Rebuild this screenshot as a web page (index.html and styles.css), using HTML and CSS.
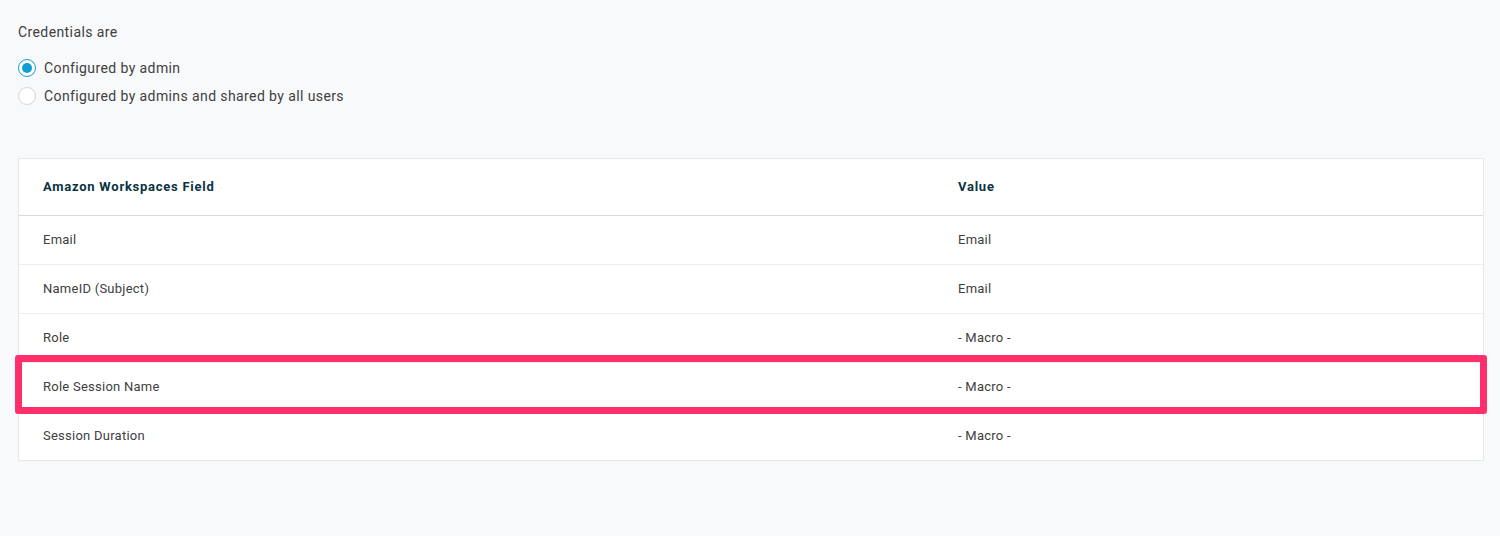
FILE: index.html
```html
<!DOCTYPE html>
<html lang="en">
<head>
    <meta charset="UTF-8">
    <title>Amazon Workspaces - Attribute mapping</title>
    <link rel="stylesheet" href="styles.css">
</head>
<body>
    <section class="credentials">
        <p class="credentials-title">Credentials are</p>
        <label class="radio-option">
            <input type="radio" name="credentials" checked>
            <span class="radio-mark"></span>
            Configured by admin
        </label>
        <label class="radio-option">
            <input type="radio" name="credentials">
            <span class="radio-mark"></span>
            Configured by admins and shared by all users
        </label>
    </section>

    <div class="field-table">
        <div class="field-row field-head">
            <div class="cell">Amazon Workspaces Field</div>
            <div class="cell">Value</div>
        </div>
        <div class="field-row">
            <div class="cell">Email</div>
            <div class="cell">Email</div>
        </div>
        <div class="field-row">
            <div class="cell">NameID (Subject)</div>
            <div class="cell">Email</div>
        </div>
        <div class="field-row">
            <div class="cell">Role</div>
            <div class="cell">- Macro -</div>
        </div>
        <div class="field-row highlighted">
            <div class="cell">Role Session Name</div>
            <div class="cell">- Macro -</div>
        </div>
        <div class="field-row">
            <div class="cell">Session Duration</div>
            <div class="cell">- Macro -</div>
        </div>
    </div>
</body>
</html>
```

FILE: styles.css
```css
:root {
    --page-bg: #f8f9fa;
    --text-color: #404040;
    --head-color: #0b3342;
    --accent: #0e9fd3;
    --highlight: #ff2f6b;
}

body {
    margin: 0;
    padding: 22px 16px 0 18px;
    font-family: Roboto, "Liberation Sans", sans-serif;
    background-color: var(--page-bg);
    color: var(--text-color);
}

.credentials-title {
    margin: 0 0 12px;
    font-size: 14px;
    line-height: 20px;
    letter-spacing: 0.4px;
}

.radio-option {
    display: flex;
    align-items: center;
    gap: 8px;
    height: 28px;
    font-size: 14px;
    letter-spacing: 0.4px;
    cursor: pointer;
}

.radio-option input {
    display: none;
}

.radio-mark {
    width: 16px;
    height: 16px;
    border: 1px solid #d4d6d9;
    border-radius: 50%;
    background: white;
    position: relative;
}

.radio-option input:checked + .radio-mark {
    border-color: var(--accent);
}

.radio-option input:checked + .radio-mark::after {
    content: "";
    position: absolute;
    top: 3px;
    left: 3px;
    width: 10px;
    height: 10px;
    border-radius: 50%;
    background: var(--accent);
}

.field-table {
    margin-top: 48px;
    background: white;
    border: 1px solid #e6e8ea;
}

.field-row {
    display: grid;
    grid-template-columns: 915px 1fr;
    height: 48px;
    border-top: 1px solid #eceef0;
    align-items: center;
    font-size: 13px;
    letter-spacing: 0.25px;
}

.field-row .cell {
    padding-left: 24px;
    padding-bottom: 2px;
}

.field-head {
    height: 56px;
    border-top: none;
    border-bottom: 1px solid #d6d8da;
    font-weight: bold;
    letter-spacing: 0.75px;
    color: var(--head-color);
}

.field-head + .field-row {
    border-top: none;
}

.highlighted {
    position: relative;
}

.highlighted::after {
    content: "";
    position: absolute;
    top: -8px;
    left: -4px;
    right: -4px;
    bottom: -3px;
    border: 7px solid var(--highlight);
    border-radius: 3px;
}
```
